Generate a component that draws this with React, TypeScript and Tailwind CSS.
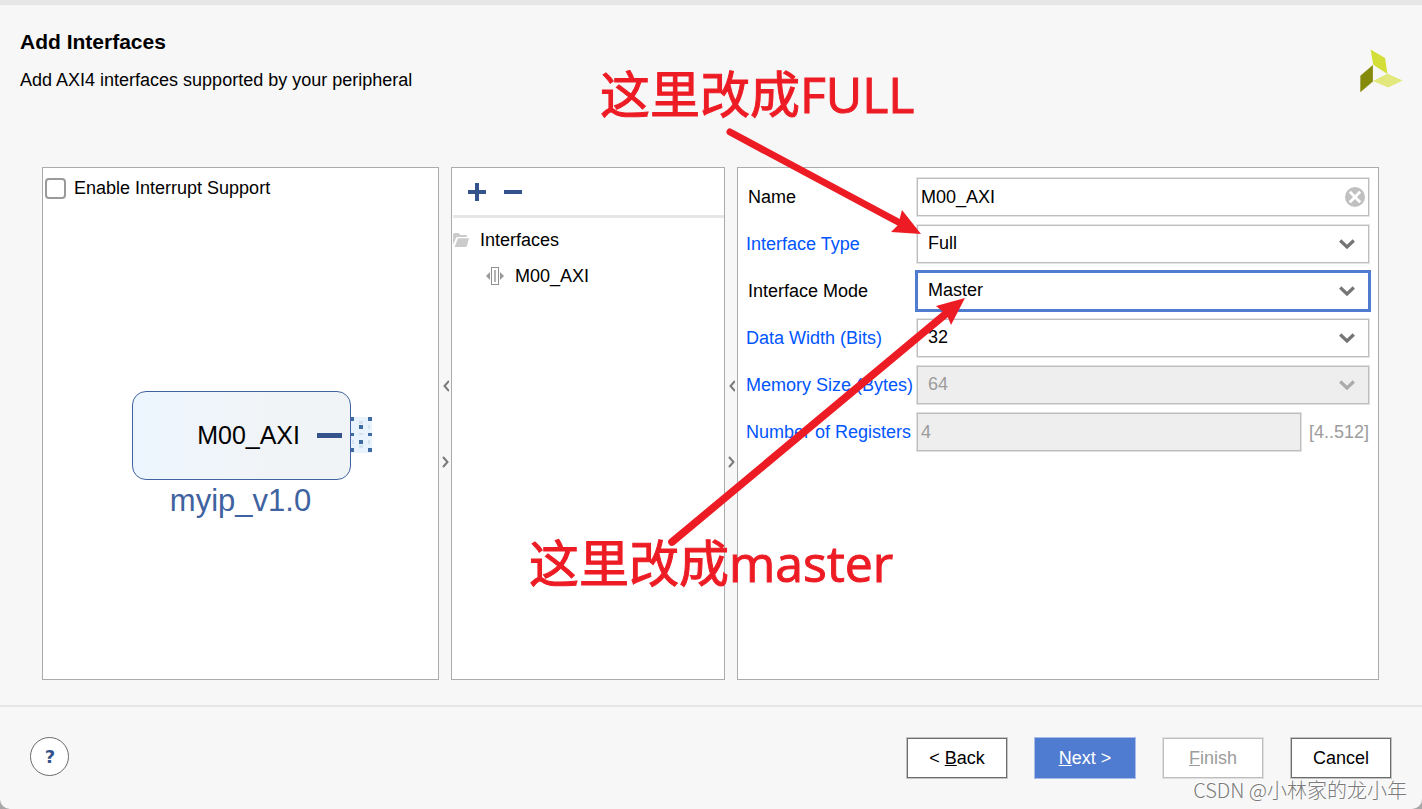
import type { ReactNode } from "react";

function Chevron({ className }: { className: string }) {
  return (
    <svg viewBox="0 0 16 10" className={`pointer-events-none absolute right-[14px] top-[14px] h-[10px] w-4 ${className}`} fill="none">
      <path d="M1.2 1.5 L8 8 L14.8 1.5" stroke="currentColor" strokeWidth="3.2" />
    </svg>
  );
}

function Row({ id, label, link, children }: { id: string; label: string; link?: boolean; children: ReactNode }) {
  return (
    <div className="grid grid-cols-[171px_1fr] items-center">
      <label htmlFor={id} className={link ? "whitespace-nowrap text-[#0055ff]" : "whitespace-nowrap pl-[2px]"}>
        {label}
      </label>
      {children}
    </div>
  );
}

function SelectBox({ id, value, focused, disabled }: { id: string; value: string; focused?: boolean; disabled?: boolean }) {
  const tone = focused
    ? "border-[#4f7bd0] ring-2 ring-[#4f7bd0] bg-white"
    : disabled
      ? "border-[#bdbdbd] ring-1 ring-[#e0e0e0] bg-[#eeeeee] text-[#9c9c9c]"
      : "border-[#bdbdbd] ring-1 ring-[#e4e4e4] bg-white";
  return (
    <div className="relative">
      <select
        id={id}
        disabled={disabled}
        defaultValue={value}
        className={`block h-[38px] w-full appearance-none border pl-[10px] pb-[2px] outline-none disabled:opacity-100 ${tone}`}
      >
        <option>{value}</option>
      </select>
      <Chevron className={disabled ? "text-[#ababab]" : "text-[#757575]"} />
    </div>
  );
}

function Splitter() {
  return (
    <div className="flex flex-col items-center justify-center gap-16 pl-px">
      <button aria-label="Collapse left" className="block">
        <svg viewBox="0 0 7 12" className="h-3 w-[7px]" fill="none">
          <path d="M7 1 L2.5 6 L7 11" stroke="#7a7a7a" strokeWidth="2" />
        </svg>
      </button>
      <button aria-label="Collapse right" className="block">
        <svg viewBox="0 0 7 12" className="h-3 w-[7px]" fill="none">
          <path d="M1 1 L5.5 6 L1 11" stroke="#7a7a7a" strokeWidth="2" />
        </svg>
      </button>
    </div>
  );
}

function BusPort() {
  return (
    <svg viewBox="0 0 21 36" className="absolute -right-[22px] top-[25px] h-9 w-[21px]">
      <rect width="21" height="36" fill="#e9f3fd" />
      <g fill="#3f6ba3">
        <rect x="0" y="0" width="3" height="4" />
        <rect x="17" y="0" width="4" height="4" />
        <rect x="8" y="8" width="4" height="4" />
        <rect x="0" y="16" width="3" height="3" />
        <rect x="17" y="16" width="4" height="3" />
        <rect x="8" y="23" width="4" height="4" />
        <rect x="0" y="31" width="3" height="4" />
        <rect x="17" y="31" width="4" height="4" />
      </g>
      <g fill="#d5e3f0">
        <rect x="8" y="4" width="4" height="3" />
        <rect x="8" y="16" width="4" height="2" />
        <rect x="8" y="28" width="4" height="3" />
        <rect x="17" y="8" width="2" height="4" />
        <rect x="17" y="23" width="2" height="4" />
        <rect x="1" y="23" width="2" height="4" />
      </g>
    </svg>
  );
}

const note = "absolute whitespace-nowrap text-[50px] leading-[60px] text-[#ed1c24] [-webkit-text-stroke:1px_#ed1c24] font-['Open_Sans','Noto_Sans_CJK_SC',sans-serif]";
const footerButton = "h-10 w-[100px] border bg-white ring-1";

export default function App() {
  return (
    <div className="relative min-h-screen bg-[#a8a8a8] font-['Liberation_Sans',Arial,sans-serif] text-[18px] leading-[22px] text-black">
      <div className="flex min-h-screen flex-col rounded-b-[10px] border-t-[5px] border-[#e6e6e6] bg-[#f7f7f7]">
        <header className="flex items-start justify-between pl-5 pr-[19px] pt-6">
          <div>
            <h1 className="text-[21px] font-bold leading-[26px]">Add Interfaces</h1>
            <p className="mt-[14px]">Add AXI4 interfaces supported by your peripheral</p>
          </div>
          <svg viewBox="119 56 130 132" className="mt-5 h-11 w-[43px]">
            <path d="M151 57 L195 83 L202 131 L159 103 Z" fill="#d3de38" />
            <path d="M120 136 L158 104 L158 154 L120 186 Z" fill="#868a0b" />
            <path d="M158 152 L202 130 L248 151 L204 172 Z" fill="#e3e87c" />
          </svg>
        </header>

        <main className="mt-[74px] grid flex-1 grid-cols-[397fr_12px_274fr_12px_642fr] pb-[25px] pl-[42px] pr-[43px]">
          <section className="flex flex-col border border-[#ababab] bg-white">
            <label className="flex items-center gap-2 pl-[2px] pt-[9px]">
              <input type="checkbox" className="h-[21px] w-[21px] appearance-none rounded-[4px] border-2 border-[#9a9a9a] bg-white" />
              Enable Interrupt Support
            </label>
            <div className="flex flex-1 flex-col items-center justify-center pt-[31px]">
              <div className="relative ml-[2px] flex h-[89px] w-[219px] items-center justify-end gap-[17px] rounded-[14px] border border-[#3f62a0] bg-linear-to-r from-[#ecf5fe] to-[#f1f4f7] to-60% pr-2 text-[25px]">
                M00_AXI
                <span className="h-[5px] w-[25px] bg-[#34528b]" />
                <BusPort />
              </div>
              <p className="mt-[3px] text-[31px] leading-[36px] text-[#3f62a0]">myip_v1.0</p>
            </div>
          </section>

          <Splitter />

          <section className="border border-[#ababab] bg-white">
            <div className="ml-px flex h-[50px] items-center gap-[18px] border-b-[3px] border-[#e6e6e6] pl-[15px]">
              <button aria-label="Add interface">
                <svg viewBox="0 0 18 18" className="h-[18px] w-[18px]" fill="#34528b">
                  <path d="M7 0h4v7h7v4h-7v7H7v-7H0V7h7z" />
                </svg>
              </button>
              <button aria-label="Remove interface">
                <svg viewBox="0 0 18 18" className="h-[18px] w-[18px]" fill="#34528b">
                  <path d="M0 7h18v4H0z" />
                </svg>
              </button>
            </div>
            <ul className="pt-1">
              <li className="flex h-9 items-center gap-[11px] pl-px">
                <svg viewBox="0 0 16 14" className="h-[14px] w-4" fill="#cbcbcb">
                  <path d="M0 1.5 Q0 0 1.5 0 H5.5 L7.5 2 H12.5 Q14 2 14 3.4 V4 H4.6 Q3.4 4 3 5 L0 11.5 Z" />
                  <path d="M5 5.2 H16 L14 12.8 Q13.7 14 12.5 14 H1.6 Z" />
                </svg>
                Interfaces
              </li>
              <li className="flex h-9 items-center gap-[11px] pl-[34px]">
                <svg viewBox="0 0 18 18" className="h-[18px] w-[18px]">
                  <path d="M4 5 V13 L0 9 Z M14 5 V13 L18 9 Z" fill="#9a9a9a" />
                  <rect x="5.5" y="0.5" width="7" height="17" fill="#fff" stroke="#8f8f8f" />
                  <rect x="8" y="3" width="2" height="12" fill="#b4b4b4" />
                </svg>
                M00_AXI
              </li>
            </ul>
          </section>

          <Splitter />

          <section className="flex flex-col gap-[9px] border border-[#ababab] bg-white pl-2 pr-[9px] pt-[10px]">
            <Row id="name" label="Name">
              <div className="relative">
                <input id="name" defaultValue="M00_AXI" className="block h-[38px] w-full border border-[#bdbdbd] bg-white pl-[3px] outline-none ring-1 ring-[#e4e4e4]" />
                <button aria-label="Clear name" className="absolute right-1 top-[9px]">
                  <svg viewBox="0 0 20 20" className="h-5 w-5">
                    <circle cx="10" cy="10" r="10" fill="#c0c0c0" />
                    <path d="M4.8 4.8 L15.2 15.2 M15.2 4.8 L4.8 15.2" stroke="#fff" strokeWidth="2.8" />
                  </svg>
                </button>
              </div>
            </Row>
            <Row id="type" label="Interface Type" link>
              <SelectBox id="type" value="Full" />
            </Row>
            <Row id="mode" label="Interface Mode">
              <SelectBox id="mode" value="Master" focused />
            </Row>
            <Row id="width" label="Data Width (Bits)" link>
              <SelectBox id="width" value="32" />
            </Row>
            <Row id="memory" label="Memory Size (Bytes)" link>
              <SelectBox id="memory" value="64" disabled />
            </Row>
            <Row id="registers" label="Number of Registers" link>
              <div className="flex items-center gap-2">
                <input id="registers" disabled defaultValue="4" className="h-[38px] min-w-0 flex-1 border border-[#bdbdbd] bg-[#eeeeee] pl-[3px] text-[#9c9c9c] ring-1 ring-[#e0e0e0]" />
                <span className="text-[#9c9c9c]">[4..512]</span>
              </div>
            </Row>
          </section>
        </main>

        <footer className="flex h-[104px] items-start justify-between border-t-2 border-[#e6e6e6] pl-[30px] pr-[31px] pt-[30px]">
          <button aria-label="Help" className="h-[39px] w-[39px] rounded-full border border-[#6b6b6b] bg-white pl-px font-['DejaVu_Sans',sans-serif] text-[18px] font-bold text-[#34528b]">
            ?
          </button>
          <div className="flex gap-7 pt-px">
            <button className={`${footerButton} border-[#6b6b6b] ring-[#c4c4c4]`}>
              &lt; <u>B</u>ack
            </button>
            <button className="h-10 w-[100px] border border-[#4f7bd0] bg-[#4f7bd0] text-white ring-1 ring-[#a7bde8]">
              <u>N</u>ext &gt;
            </button>
            <button disabled className={`${footerButton} border-[#bdbdbd] text-[#9c9c9c] ring-[#e0e0e0]`}>
              <u>F</u>inish
            </button>
            <button className={`${footerButton} border-[#6b6b6b] ring-[#c4c4c4]`}>Cancel</button>
          </div>
        </footer>
      </div>

      <svg viewBox="0 0 1422 809" className="pointer-events-none absolute left-0 top-0 h-[809px] w-[1422px]" fill="#ed1c24" stroke="#ed1c24">
        <path d="M730 132 L900 223" strokeWidth="7" strokeLinecap="round" />
        <path d="M902 210 L921 234 L891 232 L898 225 Z" stroke="none" />
        <path d="M672 542 L948 312" strokeWidth="7.6" strokeLinecap="round" />
        <path d="M936 306 L965 298 L951 325 L947 315 Z" stroke="none" />
      </svg>
      <p className={`${note} left-[600px] top-[64px]`}>这里改成FULL</p>
      <p className={`${note} left-[529px] top-[533px]`}>这里改成master</p>
      <p className="absolute bottom-[6px] right-[15px] whitespace-nowrap font-['Noto_Sans_CJK_SC',sans-serif] text-[20px] font-light leading-[26px] text-[#7a7a7a] [text-shadow:-1px_-1px_0_#ffffff]">
        CSDN @小林家的龙小年
      </p>
    </div>
  );
}
